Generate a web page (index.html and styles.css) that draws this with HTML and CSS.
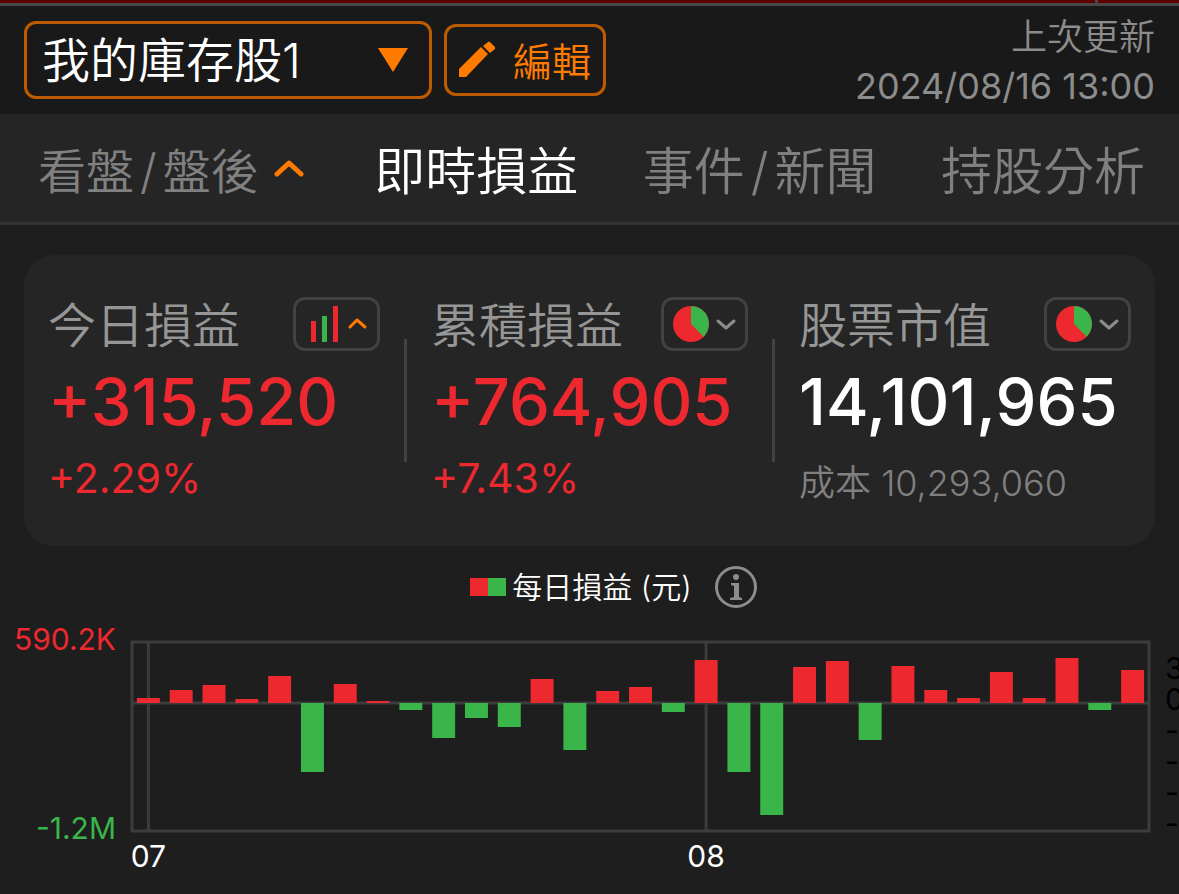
FILE: index.html
```
<!DOCTYPE html>
<html lang="zh-Hant">
<head>
  <meta charset="utf-8">
  <meta name="viewport" content="width=device-width, initial-scale=1">
  <link rel="stylesheet" href="styles.css">
  <title>我的庫存股</title>
</head>
<body>

  <div class="ticker"><span></span><span></span></div>

  <header class="topbar">
    <div class="picker">
      <select aria-label="庫存股">
        <option>我的庫存股1</option>
      </select>
      <svg class="picker-arrow" width="30" height="24" viewBox="0 0 30 24"><path d="M0 0h30L15 24z" fill="#ff7b00"/></svg>
    </div>
    <button class="edit">
      <svg width="36" height="36" viewBox="0 0 36 36" fill="#ff7b00"><path d="M0 36v-8L22 6l7 7L7 36zM24 5l5-4q1-1 2 0l5 5q1 1 0 2l-5 4z"/></svg>
      編輯
    </button>
    <p class="updated">上次更新<br><time>2024/08/16 13:00</time></p>
  </header>

  <nav class="tabs">
    <a href="#" class="tab tab-menu"><span>看盤<span class="slash">/</span>盤後</span>
      <svg width="30" height="18" viewBox="0 0 30 18"><path d="M3 15L15 4l12 11" fill="none" stroke="#ff7b00" stroke-width="5" stroke-linecap="round" stroke-linejoin="round"/></svg>
    </a>
    <a href="#" class="tab active">即時損益</a>
    <a href="#" class="tab">事件<span class="slash">/</span>新聞</a>
    <a href="#" class="tab">持股分析</a>
  </nav>

  <main>
    <section class="summary">
      <div class="item">
        <div class="item-head">
          <h2>今日損益</h2>
          <button class="chip" aria-label="今日損益圖表">
            <svg width="81" height="48" viewBox="0 0 81 48">
              <path d="M15 21h5v21h-5zM37 6h5v36h-5z" fill="#ed282e"/>
              <path d="M26 16h5v26h-5z" fill="#3ab54a"/>
              <path d="M54 27l7-7 8 7" fill="none" stroke="#ff7b00" stroke-width="3" stroke-linecap="round" stroke-linejoin="round"/>
            </svg>
          </button>
        </div>
        <p class="value up">+315,520</p>
        <p class="percent up">+2.29%</p>
      </div>
      <div class="divider"></div>
      <div class="item">
        <div class="item-head">
          <h2>累積損益</h2>
          <button class="chip" aria-label="累積損益圖表">
            <svg width="81" height="48" viewBox="0 0 81 48">
              <circle cx="27" cy="24" r="18" fill="#ed282e"/>
              <path d="M27 24V6a18 18 0 0 1 12.700 30.700z" fill="#3ab54a"/>
              <path d="M54 21l8 7 8-7" fill="none" stroke="#8c8c8c" stroke-width="3" stroke-linecap="round" stroke-linejoin="round"/>
            </svg>
          </button>
        </div>
        <p class="value up">+764,905</p>
        <p class="percent up">+7.43%</p>
      </div>
      <div class="divider"></div>
      <div class="item">
        <div class="item-head">
          <h2>股票市值</h2>
          <button class="chip" aria-label="股票市值圖表">
            <svg width="81" height="48" viewBox="0 0 81 48">
              <circle cx="27" cy="24" r="18" fill="#ed282e"/>
              <path d="M27 24V6a18 18 0 0 1 12.700 30.700z" fill="#3ab54a"/>
              <path d="M54 21l8 7 8-7" fill="none" stroke="#8c8c8c" stroke-width="3" stroke-linecap="round" stroke-linejoin="round"/>
            </svg>
          </button>
        </div>
        <p class="value">14,101,965</p>
        <p class="cost">成本 10,293,060</p>
      </div>
    </section>

    <section class="daily">
      <div class="legend">
        <span class="swatch"></span>
        <h3>每日損益 (元)</h3>
        <button class="info" aria-label="說明">
          <svg width="42" height="42" viewBox="0 0 42 42">
            <circle cx="21" cy="21" r="19.500" fill="none" stroke="#8c8c8c" stroke-width="3"/>
            <circle cx="21" cy="11" r="3" fill="#8c8c8c"/>
            <path d="M16 17h8v14l3 1v2H15v-2l4-1V20l-3-1z" fill="#8c8c8c"/>
          </svg>
        </button>
      </div>
      <div class="chart">
        <div class="axis-left">
          <span class="up">590.2K</span>
          <span class="down">-1.2M</span>
        </div>
        <svg class="plot" id="plot"></svg>
        <div class="axis-right">
          <span>3</span><span>0</span><span>-</span><span>-</span><span>-</span><span>-</span>
        </div>
      </div>
    </section>
  </main>

  <footer class="bottom"></footer>

  <script>
    // bar heights from the zero line, one per trading day
    var days = [5, 13, 18, 4, 27, -69, 19, 2, -7, -35, -15, -24, 24, -47, 12, 16, -9,
      43, -69, -112, 36, 42, -37, 37, 13, 5, 31, 5, 45, -7, 33];
    var months = { 0: '07', 17: '08' };
    var zero = 61;
    var step = 100 / days.length;
    var frame = '<rect class="frame" width="100%" height="100%"/>';
    var bars = '';

    frame += '<line class="line" x1="0" x2="100%" y1="' + zero + '" y2="' + zero + '"/>';

    for (var i = 0; i < days.length; i++) {
      var mid = step * (i + 0.5);
      var h = Math.abs(days[i]);
      var y = days[i] > 0 ? zero - h : zero;
      if (months[i]) {
        frame += '<line class="line" x1="' + mid + '%" x2="' + mid + '%" y1="0" y2="100%"/>';
        frame += '<text class="month" x="' + mid + '%" y="225">' + months[i] + '</text>';
      }
      bars += '<rect class="' + (days[i] > 0 ? 'bar-up' : 'bar-down') + '" x="' + (step * (i + 0.15)) +
        '%" y="' + y + '" width="' + (step * 0.7) + '%" height="' + h + '"/>';
    }

    document.getElementById('plot').innerHTML = frame + bars;
  </script>

</body>
</html>
```

FILE: styles.css
```
* {
  box-sizing: border-box;
}

body {
  margin: 0;
  min-height: 100vh;
  display: flex;
  flex-direction: column;
  overflow-x: hidden;
  background-color: #1e1e1e;
  color: #fff;
  font-family: Inter, "Noto Sans CJK TC", sans-serif;
  font-weight: 350;
}

h2, h3, p {
  margin: 0;
  font-weight: 350;
}

button, select {
  font: inherit;
  color: inherit;
  background: none;
  cursor: pointer;
}

svg {
  display: block;
  flex: none;
}

.up {
  color: #ed282e;
}

.down {
  color: #3ab54a;
}

.ticker {
  display: grid;
  grid-template-columns: 1095fr 81fr;
  gap: 3px;
  height: 6px;
  border-bottom: 3px solid #474747;
  background-color: #474747;
}

.ticker span {
  background-color: #5e0000;
}

.topbar {
  display: flex;
  align-items: center;
  gap: 12px;
  height: 108px;
  padding: 0 24px;
  background-color: #191919;
}

.picker {
  position: relative;
  flex: 0 1 408px;
}

.picker select {
  appearance: none;
  width: 100%;
  height: 78px;
  padding: 0 60px 0 15px;
  border: 3px solid #bd5b00;
  border-radius: 12px;
  font-size: 48px;
}

.picker-arrow {
  position: absolute;
  top: 27px;
  right: 24px;
  pointer-events: none;
}

.edit {
  display: flex;
  align-items: center;
  gap: 18px;
  height: 72px;
  padding: 0 12px 2px;
  border: 3px solid #bd5b00;
  border-radius: 12px;
  color: #ff7b00;
  font-size: 39px;
  white-space: nowrap;
}

.updated {
  margin-left: auto;
  padding-top: 4px;
  color: #8c8c8c;
  font-size: 36px;
  line-height: 49px;
  text-align: right;
  white-space: nowrap;
}

.updated time {
  font-weight: 400;
}

.tabs {
  display: flex;
  justify-content: space-between;
  align-items: center;
  height: 111px;
  padding: 0 34px 0 38px;
  background-color: #252525;
  border-bottom: 3px solid #333;
}

.tab {
  color: #808080;
  font-size: 51px;
  text-decoration: none;
  white-space: nowrap;
}

.tab-menu {
  display: flex;
  align-items: center;
  gap: 15px;
  margin-right: 6px;
  font-size: 48px;
}

.slash {
  margin: 0 6px;
}

.tab.active {
  color: #fff;
}

main {
  flex: 1;
}

.summary {
  display: grid;
  grid-template-columns: 380fr 3px 365fr 3px 380fr;
  margin: 30px 24px 0;
  background-color: #252525;
  border-radius: 30px;
}

.item {
  padding: 42px 24px 35px;
  white-space: nowrap;
}

.item-head {
  display: flex;
  justify-content: space-between;
  align-items: center;
  height: 54px;
}

.item-head h2 {
  padding-top: 4px;
  color: #969696;
  font-size: 48px;
  line-height: 54px;
}

.chip {
  padding: 0;
  border: 3px solid #424242;
  border-radius: 12px;
}

.value {
  margin-top: 11px;
  font-size: 65px;
  font-weight: 500;
  line-height: 80px;
}

.percent {
  margin-top: 8px;
  font-size: 41px;
  font-weight: 400;
  line-height: 56px;
}

.cost {
  margin-top: 13px;
  color: #808080;
  font-size: 36px;
  line-height: 56px;
}

.divider {
  align-self: center;
  height: 123px;
  background-color: #424242;
}

.legend {
  display: flex;
  justify-content: center;
  align-items: center;
  margin-top: 20px;
  padding-left: 48px;
}

.swatch {
  width: 36px;
  height: 18px;
  background: linear-gradient(to right, #ed282e 50%, #3ab54a 50%);
}

.legend h3 {
  margin: 0 23px 0 6px;
  font-size: 30px;
  line-height: 42px;
}

.info {
  padding: 0;
  border: none;
}

.chart {
  display: flex;
  align-items: flex-start;
  margin-top: 34px;
  padding-bottom: 60px;
  font-size: 30px;
  font-weight: 400;
}

.axis-left {
  display: flex;
  flex-direction: column;
  justify-content: space-between;
  width: 132px;
  height: 189px;
  margin-top: -3px;
  padding-right: 16px;
  text-align: right;
  line-height: 0;
}

.plot {
  flex: 1;
  height: 189px;
  overflow: visible;
}

.frame {
  fill: none;
  stroke: #3c3c3c;
  stroke-width: 3px;
}

.line {
  stroke: #3c3c3c;
  stroke-width: 3px;
}

.bar-up {
  fill: #ed282e;
}

.bar-down {
  fill: #3ab54a;
}

.month {
  fill: #fff;
  text-anchor: middle;
}

.axis-right {
  display: flex;
  flex-direction: column;
  width: 30px;
  padding: 11px 0 0 16px;
  overflow: hidden;
  color: #000;
  line-height: 31px;
}

.bottom {
  height: 3px;
  background-color: #242424;
}
```
